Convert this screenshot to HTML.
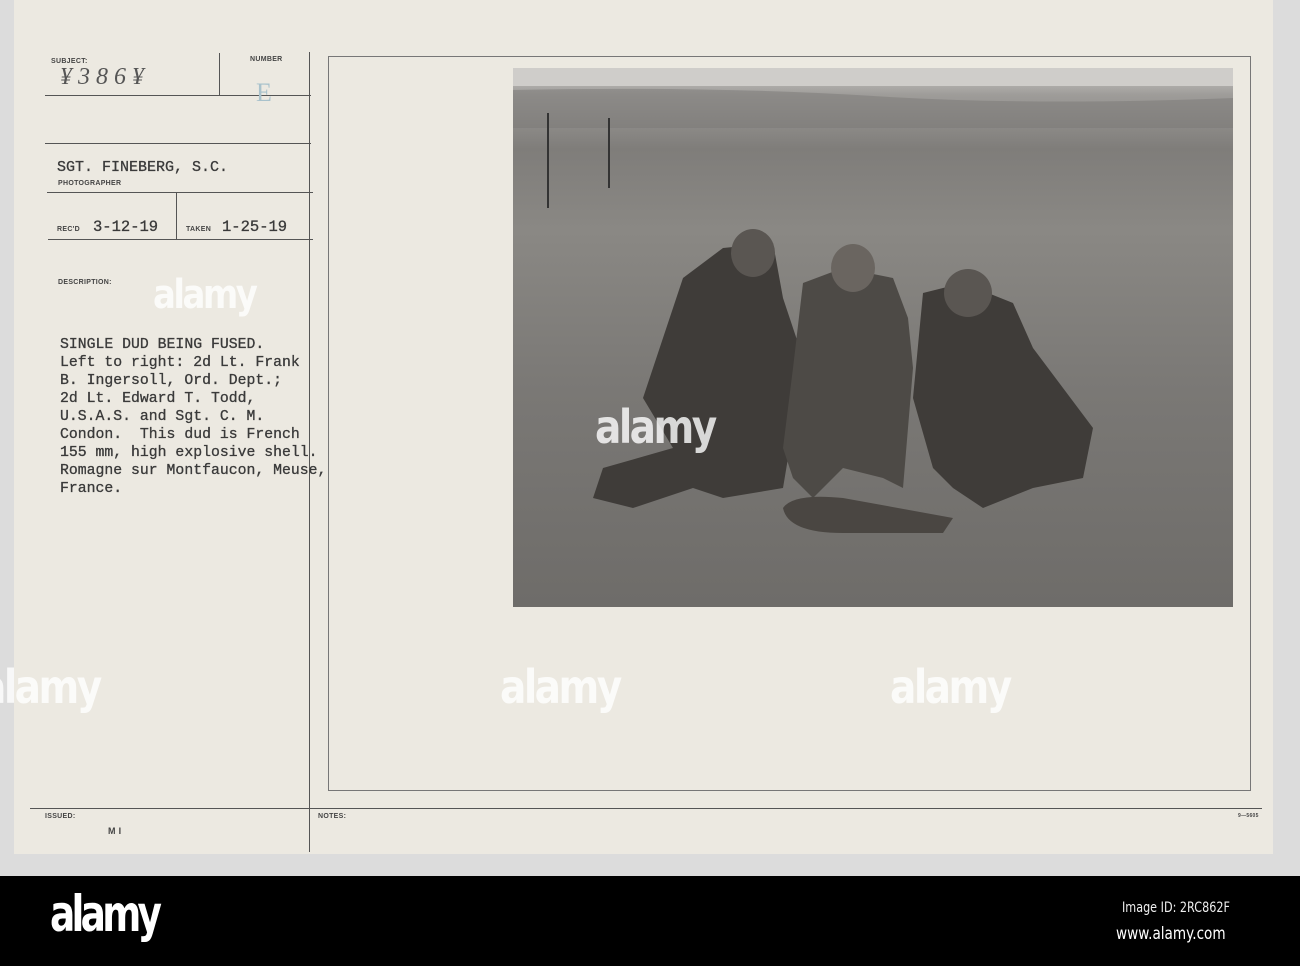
<!DOCTYPE html>
<html><head><meta charset="utf-8"><style>
body{margin:0;width:1300px;height:966px;background:#dcdcdc;position:relative;overflow:hidden;font-family:"Liberation Mono",monospace;}
.card{position:absolute;left:14px;top:0;width:1259px;height:854px;background:#ece9e1;}
.l{position:absolute;background:#555;}
.t{position:absolute;color:#3a3a3a;white-space:pre;}
.sm{font-family:"Liberation Sans",sans-serif;font-size:7px;font-weight:bold;color:#444;letter-spacing:.3px}
.ty{font-size:14.8px;line-height:18px;color:#3a3a3a;-webkit-text-stroke:.3px #3a3a3a}
.wm{position:absolute;font-family:"DejaVu Sans",sans-serif;font-weight:bold;color:rgba(255,255,255,.8);letter-spacing:-3px;transform:scaleX(.85);transform-origin:left}
.bar{position:absolute;left:0;top:876px;width:1300px;height:90px;background:#000;}
</style></head><body>
<div class="card"></div>
<div class="l" style="left:45px;top:95px;width:266px;height:1px"></div>
<div class="l" style="left:219px;top:53px;width:1px;height:42px"></div>
<div class="l" style="left:45px;top:143px;width:266px;height:1px"></div>
<div class="l" style="left:47px;top:192px;width:266px;height:1px"></div>
<div class="l" style="left:176px;top:193px;width:1px;height:46px"></div>
<div class="l" style="left:48px;top:239px;width:265px;height:1px"></div>
<div class="l" style="left:309px;top:52px;width:1px;height:800px"></div>
<div class="l" style="left:30px;top:808px;width:1232px;height:1px"></div>
<div style="position:absolute;left:328px;top:56px;width:921px;height:733px;border:1px solid #777"></div>
<div class="t sm" style="left:51px;top:58px">SUBJECT:</div>
<div class="t sm" style="left:250px;top:56px">NUMBER</div>
<div class="t" style="left:60px;top:64px;font-family:'Liberation Serif',serif;font-style:italic;font-size:24px;color:#555;letter-spacing:6px">¥386¥</div>
<div class="t" style="left:256px;top:78px;font-family:'Liberation Serif',serif;font-size:26px;color:#a9c2cc">E</div>
<div class="t ty" style="left:57px;top:159px;font-size:15px">SGT. FINEBERG, S.C.</div>
<div class="t sm" style="left:58px;top:180px">PHOTOGRAPHER</div>
<div class="t sm" style="left:57px;top:226px">REC'D</div>
<div class="t ty" style="left:93px;top:218px;font-size:15.5px">3-12-19</div>
<div class="t sm" style="left:186px;top:226px">TAKEN</div>
<div class="t ty" style="left:222px;top:218px;font-size:15.5px">1-25-19</div>
<div class="t sm" style="left:58px;top:279px">DESCRIPTION:</div>
<div class="t ty" style="left:60px;top:336px">SINGLE DUD BEING FUSED.
Left to right: 2d Lt. Frank
B. Ingersoll, Ord. Dept.;
2d Lt. Edward T. Todd,
U.S.A.S. and Sgt. C. M.
Condon.  This dud is French
155 mm, high explosive shell.
Romagne sur Montfaucon, Meuse,
France.</div>
<div class="t sm" style="left:45px;top:813px">ISSUED:</div>
<div class="t sm" style="left:318px;top:813px">NOTES:</div>
<div class="t sm" style="left:1238px;top:813px;font-size:5px">9—5605</div>
<div class="t sm" style="left:108px;top:826px;font-size:9px">M I</div>
<svg style="position:absolute;left:513px;top:68px" width="720" height="539" viewBox="0 0 720 539">
<defs><linearGradient id="g" x1="0" y1="0" x2="0" y2="1">
<stop offset="0" stop-color="#cbc9c6"/><stop offset=".05" stop-color="#9e9c99"/><stop offset=".15" stop-color="#7f7d7a"/><stop offset=".3" stop-color="#8a8884"/><stop offset=".6" stop-color="#7a7875"/><stop offset="1" stop-color="#6e6c69"/></linearGradient></defs>
<rect width="720" height="539" fill="url(#g)"/>
<rect y="0" width="720" height="18" fill="#cfcdca"/>
<path d="M0 22 Q200 18 360 28 T720 30 L720 60 L0 60Z" fill="#7a7875" opacity=".5"/>
<g stroke="#333" stroke-width="2"><line x1="35" y1="45" x2="35" y2="140"/><line x1="96" y1="50" x2="96" y2="120"/></g>
<g fill="#3f3c39">
<path d="M170 210 L210 180 L260 175 L270 230 L290 290 L285 330 L270 420 L210 430 L180 420 L120 440 L80 430 L90 400 L160 380 L130 330 Z"/>
<path d="M290 215 L330 200 L380 210 L395 250 L400 300 L390 420 L370 410 L330 400 L300 430 L280 410 L270 380 L280 300 Z" fill="#4d4a46"/>
<path d="M410 225 L450 215 L500 235 L520 280 L580 360 L570 410 L520 420 L470 440 L440 420 L420 400 L400 330 Z"/>
<ellipse cx="240" cy="185" rx="22" ry="24" fill="#5a5652"/>
<ellipse cx="340" cy="200" rx="22" ry="24" fill="#6a6560"/>
<ellipse cx="455" cy="225" rx="24" ry="24" fill="#5a5652"/>
<path d="M270 440 Q280 425 330 430 L440 450 L430 465 L330 465 Q275 465 270 440Z" fill="#4a4642"/>
</g>
</svg>
<div class="wm" style="left:153px;top:272px;font-size:40px">alamy</div>
<div class="wm" style="left:595px;top:400px;font-size:46px">alamy</div>
<div class="wm" style="left:-20px;top:660px;font-size:46px">alamy</div>
<div class="wm" style="left:500px;top:660px;font-size:46px">alamy</div>
<div class="wm" style="left:890px;top:660px;font-size:46px">alamy</div>
<div class="bar"></div>
<div class="t" style="left:50px;top:885px;color:#fff;font-family:'DejaVu Sans',sans-serif;font-weight:bold;font-size:50px;letter-spacing:-5px;transform:scaleX(.75);transform-origin:left">alamy</div>
<div class="t" style="left:1122px;top:900px;color:#eee;font-family:'DejaVu Sans',sans-serif;font-size:14px;transform:scaleX(.8);transform-origin:left">Image ID: 2RC862F</div>
<div class="t" style="left:1116px;top:924px;color:#fff;font-family:'DejaVu Sans',sans-serif;font-size:17px;transform:scaleX(.8);transform-origin:left">www.alamy.com</div>
</body></html>
